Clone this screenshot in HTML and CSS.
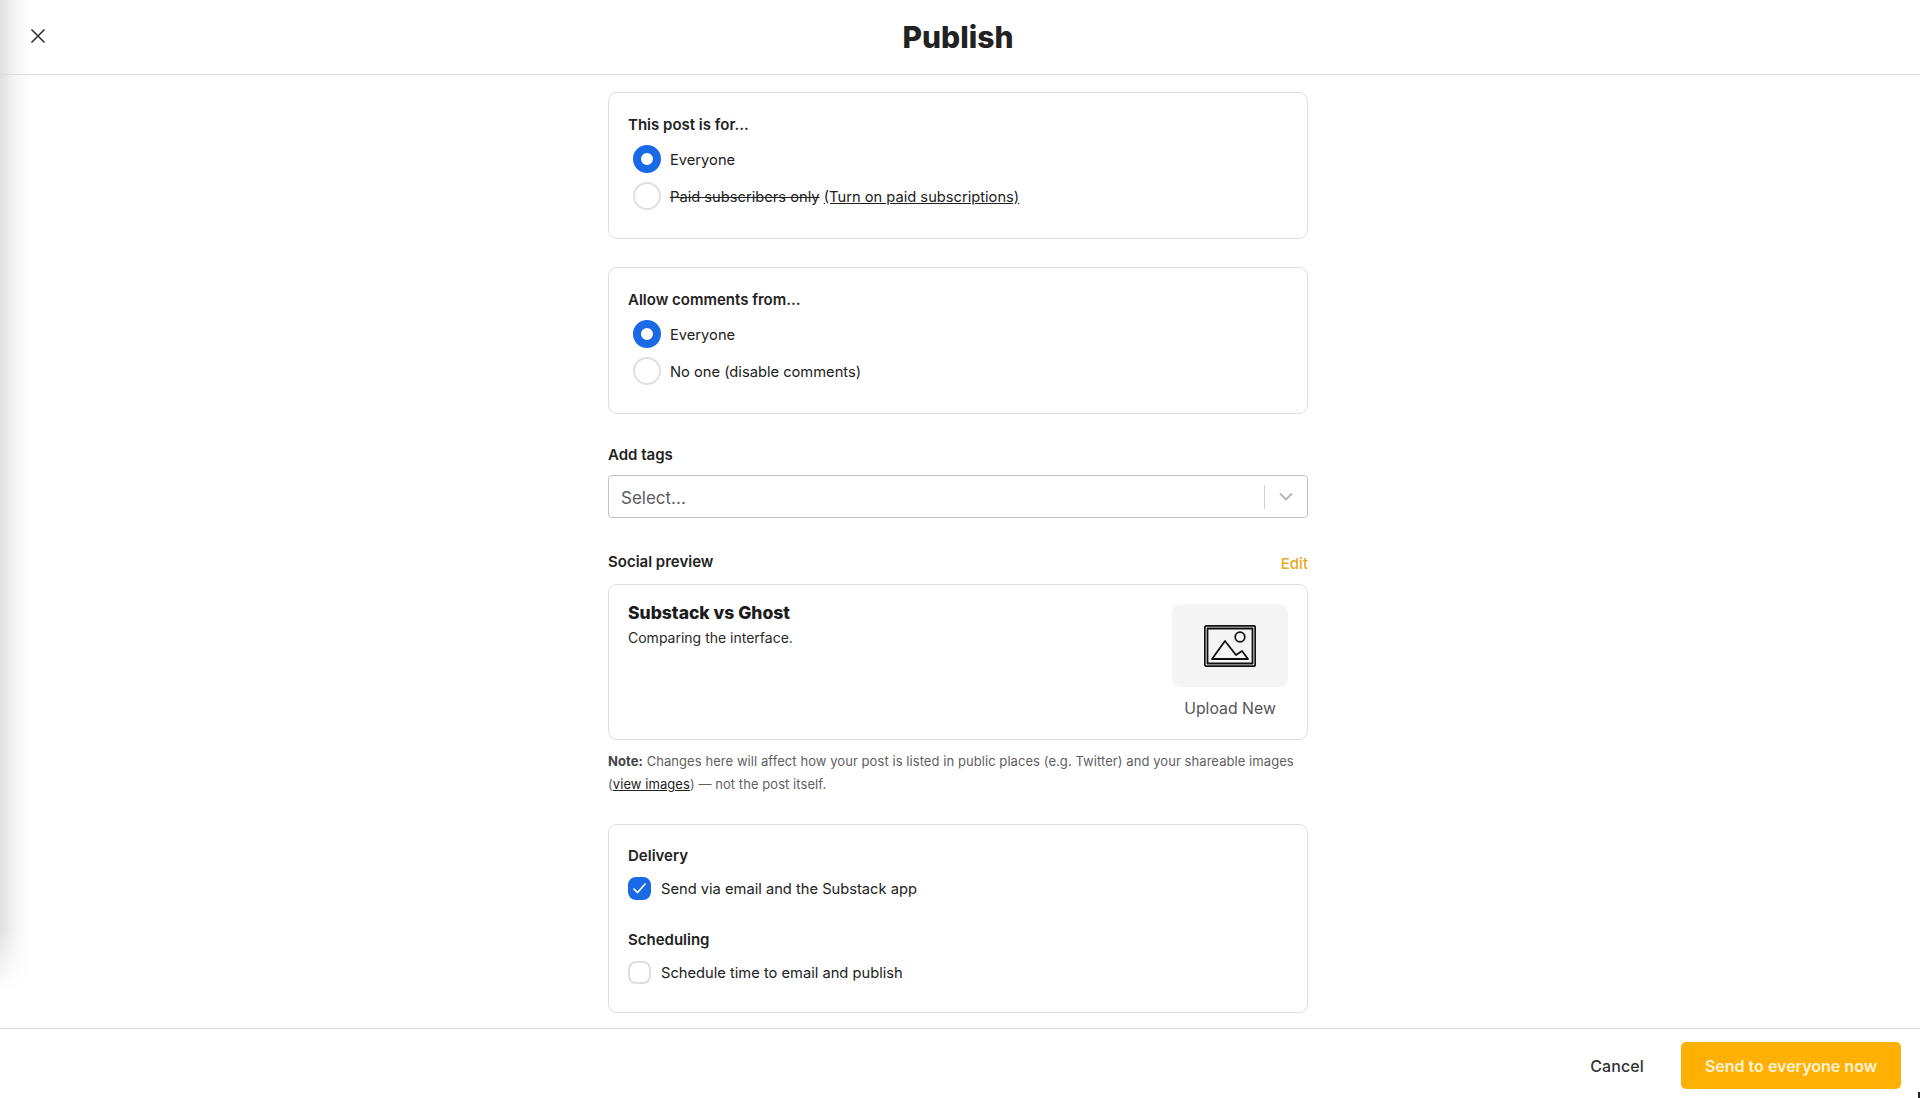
FILE: index.html
```html
<!DOCTYPE html>
<html lang="en">

<head>
    <meta charset="UTF-8">
    <title>Publish</title>
    <link rel="stylesheet" href="styles.css">
</head>

<body>
    <div class="side-shadow"></div>

    <div class="page">
        <header class="top-bar">
            <svg class="close-icon" width="16" height="16" viewBox="0 0 16 16">
                <path d="M1.5 1.5 14.5 14.5M14.5 1.5 1.5 14.5" />
            </svg>
            <h1>Publish</h1>
        </header>

        <main class="content">
            <section class="box audience">
                <h3>This post is for...</h3>
                <div class="radio-row">
                    <span class="radio checked"></span>
                    <span class="radio-text">Everyone</span>
                </div>
                <div class="radio-row">
                    <span class="radio"></span>
                    <span class="radio-text"><s>Paid subscribers only</s> <u>(Turn on paid subscriptions)</u></span>
                </div>
            </section>

            <section class="box audience">
                <h3>Allow comments from...</h3>
                <div class="radio-row">
                    <span class="radio checked"></span>
                    <span class="radio-text">Everyone</span>
                </div>
                <div class="radio-row">
                    <span class="radio"></span>
                    <span class="radio-text">No one (disable comments)</span>
                </div>
            </section>

            <div class="tags">
                <h3>Add tags</h3>
                <div class="select">
                    <span class="select-text">Select...</span>
                    <span class="select-sep"></span>
                    <svg class="chevron" width="14" height="9" viewBox="0 0 14 9">
                        <path d="M1 1.5 7 7.5 13 1.5" />
                    </svg>
                </div>
            </div>

            <div class="social-head">
                <h3>Social preview</h3>
                <a class="edit">Edit</a>
            </div>
            <section class="box social">
                <div class="social-text">
                    <h2>Substack vs Ghost</h2>
                    <p>Comparing the interface.</p>
                </div>
                <div class="upload">
                    <div class="thumb">
                        <svg width="52" height="42" viewBox="0 0 52 42">
                            <rect x="0.75" y="0.75" width="50.5" height="40.5" rx="2" />
                            <rect x="3.5" y="3.5" width="45" height="35" />
                            <circle cx="36" cy="12" r="4.8" />
                            <path d="M8 34 21 16 32 30 38 26 44 34Z" />
                        </svg>
                    </div>
                    <div class="upload-label">Upload New</div>
                </div>
            </section>
            <p class="note"><b>Note:</b> Changes here will affect how your post is listed in public places (e.g. Twitter) and your shareable images (<u>view images</u>) — not the post itself.</p>

            <section class="box delivery">
                <h3>Delivery</h3>
                <div class="check-row">
                    <span class="check checked">
                        <svg width="15" height="12" viewBox="0 0 15 12">
                            <path d="M1.5 6.5 5.5 10.5 13.5 1.5" />
                        </svg>
                    </span>
                    <span class="check-text">Send via email and the Substack app</span>
                </div>
                <h3 class="second">Scheduling</h3>
                <div class="check-row">
                    <span class="check"></span>
                    <span class="check-text">Schedule time to email and publish</span>
                </div>
            </section>
        </main>

        <footer class="bottom-bar">
            <a class="cancel">Cancel</a>
            <button class="send">Send to everyone now</button>
        </footer>
    </div>

    <div class="cursor-bit"></div>
</body>

</html>
```

FILE: styles.css
```css
body {
    margin: 0;
    font-family: Inter, "Liberation Sans", sans-serif;
    color: #222;
    background: #fff;
}

.page {
    height: 1098px;
    display: flex;
    flex-direction: column;
    overflow: hidden;
}

.side-shadow {
    position: absolute;
    left: 0;
    top: 0;
    width: 32px;
    height: 990px;
    background: linear-gradient(to right, #e0e0e0, #f4f4f4 45%, #fff);
    -webkit-mask-image: linear-gradient(to bottom, #000 94%, transparent);
    mask-image: linear-gradient(to bottom, #000 94%, transparent);
}

.top-bar {
    height: 74px;
    flex-shrink: 0;
    border-bottom: 1px solid #dcdcdc;
    display: flex;
    align-items: center;
    justify-content: center;
    padding-right: 4px;
    position: relative;
}

.top-bar h1 {
    margin: 0;
    font-size: 30px;
    font-weight: 800;
    color: #222;
}

.close-icon {
    position: absolute;
    left: 30px;
    top: 28px;
}

.close-icon path {
    stroke: #333;
    stroke-width: 1.6;
    fill: none;
}

.content {
    flex: 1;
    width: 700px;
    margin-left: 608px;
    padding-top: 17px;
}

.box {
    border: 1px solid #dedede;
    border-radius: 9px;
    box-sizing: border-box;
}

h3 {
    margin: 0;
    font-size: 15px;
    line-height: 20px;
    font-weight: 600;
    color: #222;
}

.audience {
    height: 147px;
    padding: 22px 19px 0;
    margin-bottom: 28px;
}

.audience h3 {
    margin-bottom: 5px;
}

.radio-row {
    display: flex;
    align-items: center;
    font-size: 14.7px;
    height: 37px;
}

.radio-text {
    padding-top: 2px;
}

.radio {
    width: 28px;
    height: 28px;
    box-sizing: border-box;
    border: 2px solid #e0e0e0;
    border-radius: 50%;
    margin: 0 9px 0 5px;
    flex-shrink: 0;
}

.radio.checked {
    border: 8px solid #1a69e6;
}

.tags {
    padding-top: 3px;
    margin-bottom: 34px;
}

.tags h3 {
    margin-bottom: 10px;
}

.select {
    height: 43px;
    box-sizing: border-box;
    border: 1px solid #c2c2c2;
    border-radius: 4px;
    display: flex;
    align-items: center;
    padding: 0 14px 0 12px;
}

.select-text {
    flex: 1;
    font-size: 17px;
    padding-top: 2px;
    color: #5c5c5c;
}

.select-sep {
    width: 1px;
    height: 24px;
    background: #d0d0d0;
    margin-right: 14px;
}

.chevron path {
    stroke: #b5b5b5;
    stroke-width: 1.8;
    fill: none;
}

.social-head {
    display: flex;
    justify-content: space-between;
    align-items: center;
    margin-bottom: 12px;
}

.edit {
    font-size: 15px;
    font-weight: 500;
    color: #e6a91f;
    position: relative;
    top: 1px;
}

.social {
    height: 156px;
    padding: 19px 19px 0 19px;
    display: flex;
    justify-content: space-between;
}

.social-text {
    margin-top: -2px;
}

.social-text h2 {
    margin: 0 0 4px;
    font-size: 17.5px;
    line-height: 22px;
    font-weight: 800;
    color: #1c1c1c;
}

.social-text p {
    margin: 0;
    font-size: 14px;
    line-height: 20px;
    color: #2a2a2a;
}

.upload {
    width: 116px;
    text-align: center;
}

.thumb {
    height: 83px;
    background: #f5f5f5;
    border-radius: 9px;
    display: flex;
    align-items: center;
    justify-content: center;
}

.thumb svg * {
    fill: none;
    stroke: #111;
    stroke-width: 1.8;
    stroke-linejoin: round;
}

.upload-label {
    margin-top: 12px;
    font-size: 15.8px;
    line-height: 20px;
    color: #555;
}

.note {
    margin: 10px 0 28px;
    font-size: 13px;
    line-height: 23px;
    letter-spacing: 0.065px;
    color: #5f5f5f;
}

.note b {
    font-weight: 700;
    color: #444;
}

.note u {
    color: #222;
}

.delivery {
    height: 189px;
    padding: 21px 19px 0;
}

.check-row {
    display: flex;
    align-items: center;
    font-size: 14.7px;
    height: 24px;
    margin-top: 10px;
}

.check-text {
    padding-top: 2px;
}

.delivery .second {
    margin-top: 30px;
}

.check {
    width: 23px;
    height: 23px;
    box-sizing: border-box;
    border: 2px solid #dedede;
    border-radius: 8px;
    margin-right: 10px;
    flex-shrink: 0;
    display: flex;
    align-items: center;
    justify-content: center;
}

.check.checked {
    background: #1a69e6;
    border-color: #1a69e6;
}

.check svg path {
    stroke: #fff;
    stroke-width: 1.6;
    fill: none;
}

.bottom-bar {
    height: 69px;
    flex-shrink: 0;
    border-top: 1px solid #dcdcdc;
    display: flex;
    align-items: center;
    justify-content: flex-end;
    padding-right: 19px;
}

.bottom-bar > * {
    position: relative;
    top: 2px;
}

.cancel {
    font-size: 16px;
    font-weight: 500;
    color: #333;
    letter-spacing: 0.1px;
    margin-right: 37px;
}

.send {
    width: 220px;
    height: 47px;
    border: 0;
    border-radius: 5px;
    background: #ffb005;
    color: #fff3d6;
    font-family: inherit;
    font-size: 16px;
    font-weight: 600;
}

.cursor-bit {
    position: absolute;
    right: 0;
    top: 1092px;
    width: 2px;
    height: 6px;
    background: #222;
}
```
